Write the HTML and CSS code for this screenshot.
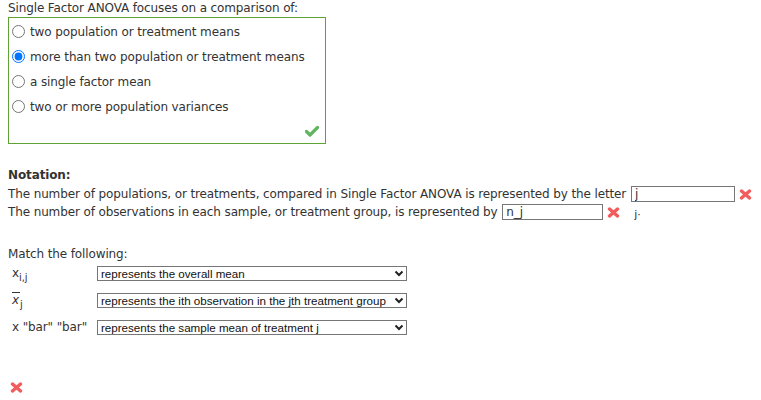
FILE: index.html
```html
<!DOCTYPE html>
<html>
<head>
<meta charset="utf-8">
<link rel="stylesheet" href="styles.css">
</head>
<body>
<div class="page">
  <section class="question">
    <div class="prompt">Single Factor ANOVA focuses on a comparison of:</div>
    <div class="choices">
      <label class="choice"><input type="radio" name="anova" class="radio"><span>two population or treatment means</span></label>
      <label class="choice"><input type="radio" name="anova" class="radio" checked><span>more than two population or treatment means</span></label>
      <label class="choice"><input type="radio" name="anova" class="radio"><span>a single factor mean</span></label>
      <label class="choice"><input type="radio" name="anova" class="radio"><span>two or more population variances</span></label>
      <div class="mark-row">
        <svg class="check" width="14" height="12" viewBox="0 0 14 12"><path d="M1.5 6.5 L5 10 L12.5 2.5" fill="none" stroke="#62b560" stroke-width="3.2" stroke-linejoin="round" stroke-linecap="round"/></svg>
      </div>
    </div>
  </section>

  <section class="notation">
    <div class="heading">Notation:</div>
    <div class="line">The number of populations, or treatments, compared in Single Factor ANOVA is represented by the letter <input class="answer answer-wide" type="text" value="j"><svg class="cross" width="13" height="11" viewBox="0 0 13 11"><path d="M2.5 2 L10.5 9 M10.5 2 L2.5 9" stroke="#f25c5c" stroke-width="3.4" stroke-linecap="round"/></svg></div>
    <div class="line">The number of observations in each sample, or treatment group, is represented by <input class="answer answer-narrow" type="text" value="n_j"><svg class="cross" width="13" height="11" viewBox="0 0 13 11"><path d="M2.5 2 L10.5 9 M10.5 2 L2.5 9" stroke="#f25c5c" stroke-width="3.4" stroke-linecap="round"/></svg><span class="hint">j·</span></div>
  </section>

  <section class="match">
    <div class="match-title">Match the following:</div>
    <div class="match-grid">
      <div class="term">x<sub>i,j</sub></div>
      <div class="select-wrap">
        <select class="pick"><option>represents the overall mean</option></select>
        <svg class="chev" width="10" height="7" viewBox="0 0 10 7"><path d="M1.5 1.5 L5 5 L8.5 1.5" fill="none" stroke="#222" stroke-width="2"/></svg>
      </div>
      <div class="term"><span class="xbar">x</span><sub>j</sub></div>
      <div class="select-wrap">
        <select class="pick"><option>represents the ith observation in the jth treatment group</option></select>
        <svg class="chev" width="10" height="7" viewBox="0 0 10 7"><path d="M1.5 1.5 L5 5 L8.5 1.5" fill="none" stroke="#222" stroke-width="2"/></svg>
      </div>
      <div class="term">x "bar" "bar"</div>
      <div class="select-wrap">
        <select class="pick"><option>represents the sample mean of treatment j</option></select>
        <svg class="chev" width="10" height="7" viewBox="0 0 10 7"><path d="M1.5 1.5 L5 5 L8.5 1.5" fill="none" stroke="#222" stroke-width="2"/></svg>
      </div>
    </div>
  </section>

  <div class="result">
    <svg class="cross" width="13" height="11" viewBox="0 0 13 11"><path d="M2.5 2 L10.5 9 M10.5 2 L2.5 9" stroke="#f25c5c" stroke-width="3.4" stroke-linecap="round"/></svg>
  </div>
</div>
</body>
</html>
```

FILE: styles.css
```css
html, body {
  margin: 0;
  padding: 0;
  background: #ffffff;
}

.page {
  padding: 0 8px;
  font-family: "DejaVu Sans", sans-serif;
  font-size: 12px;
  letter-spacing: -0.12px;
  color: #333333;
}

.prompt {
  height: 17px;
  line-height: 16px;
}

.choices {
  width: 316px;
  height: 124px;
  border: 1px solid #5fa334;
  display: flex;
  flex-direction: column;
  padding-top: 1px;
  box-sizing: content-box;
}

.choice {
  display: flex;
  align-items: center;
  height: 25px;
}

.radio {
  width: 13px;
  height: 13px;
  margin: 0 5px 0 3px;
  flex: none;
}

.mark-row {
  flex: 1;
  display: flex;
  justify-content: flex-end;
  align-items: flex-end;
  padding: 0 6px 6px 0;
}

.notation {
  margin-top: 23px;
}

.heading {
  font-weight: bold;
  line-height: 16px;
  margin-bottom: 2px;
}

.line {
  display: flex;
  align-items: center;
  height: 18px;
  white-space: pre;
}

.answer {
  height: 16px;
  box-sizing: border-box;
  border: 1px solid #767676;
  padding: 0 3px;
  margin: 0 0 0 1px;
  font-family: "DejaVu Sans", sans-serif;
  font-size: 12px;
  color: #333333;
  outline: none;
  border-radius: 0;
}

.answer-wide {
  width: 104px;
}

.answer-narrow {
  width: 101px;
}

.cross {
  flex: none;
  margin-left: 4px;
}

.hint {
  font-size: 11px;
  margin-left: 14px;
  margin-top: 4px;
}

.match {
  margin-top: 25px;
}

.match-title {
  line-height: 16px;
}

.match-grid {
  display: grid;
  grid-template-columns: 85px 310px;
  grid-auto-rows: 15px;
  row-gap: 12px;
  align-items: center;
  padding-left: 4px;
  margin-top: 4px;
}

.term {
  font-size: 12px;
  line-height: 15px;
  white-space: nowrap;
}

.term sub {
  font-size: 10px;
  vertical-align: -4px;
  line-height: 0;
}

.xbar {
  display: inline-block;
  font-style: italic;
  border-top: 1px solid #333333;
  padding: 2px 1px 0 0;
  line-height: 11px;
  margin-top: -4px;
}

.select-wrap {
  position: relative;
  width: 310px;
  height: 15px;
}

.pick {
  appearance: none;
  -webkit-appearance: none;
  display: block;
  width: 310px;
  height: 15px;
  box-sizing: border-box;
  font-family: "Liberation Sans", Arial, sans-serif;
  font-size: 11.6px;
  line-height: 13px;
  letter-spacing: 0;
  color: #111111;
  border: 1px solid #767676;
  border-radius: 0;
  padding: 0 12px 0 3px;
  margin: 0;
  background: #ffffff;
}

.chev {
  position: absolute;
  right: 3px;
  top: 4px;
  pointer-events: none;
}

.result {
  display: flex;
  margin-top: 47px;
  padding-left: 2px;
}

.result .cross {
  margin-left: 0;
}
```
